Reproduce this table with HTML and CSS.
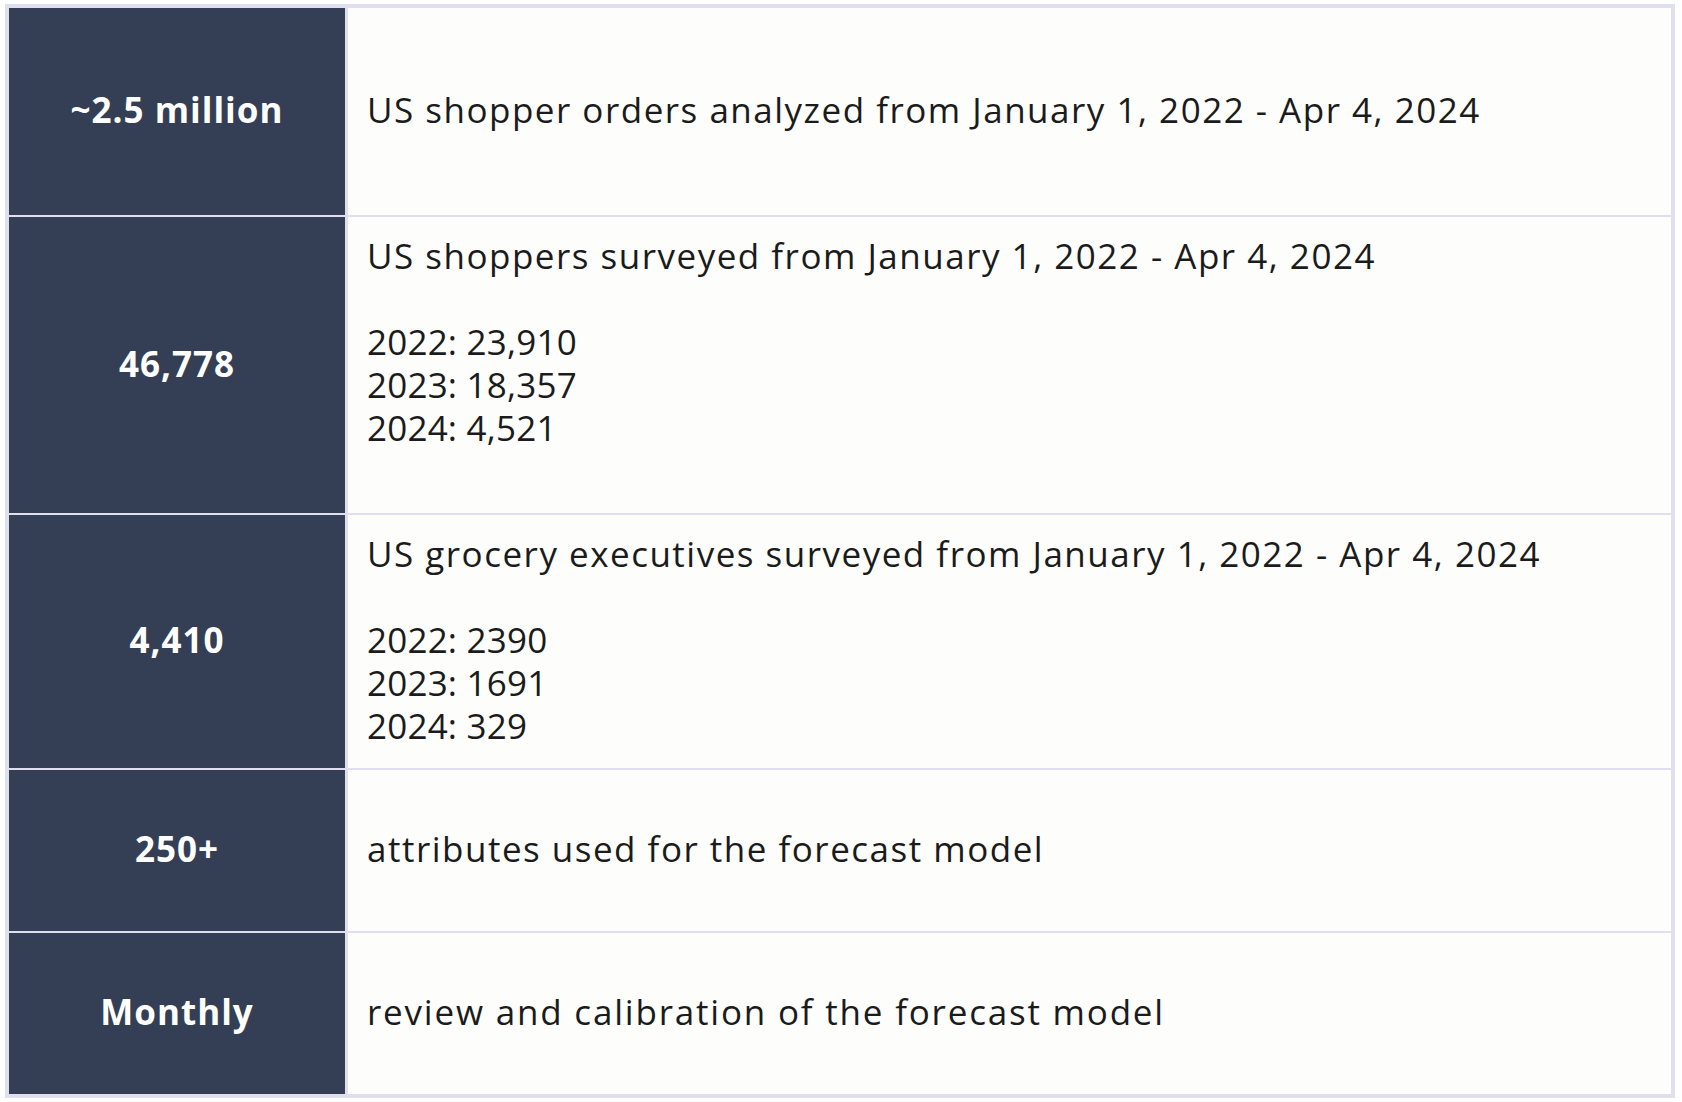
FILE: index.html
```html
<!DOCTYPE html>
<html lang="en">
<head>
<meta charset="utf-8">
<title>Data sources</title>
<link rel="stylesheet" href="styles.css">
</head>
<body>
<div class="facts">
  <div class="key">~2.5 million</div>
  <div class="val val--center">US shopper orders analyzed from January 1, 2022 - Apr 4, 2024</div>

  <div class="key">46,778</div>
  <div class="val">
    <p class="line">US shoppers surveyed from January 1, 2022 - Apr 4, 2024</p>
    <p class="gap-line">2022: 23,910<br>2023: 18,357<br>2024: 4,521</p>
  </div>

  <div class="key">4,410</div>
  <div class="val">
    <p class="line">US grocery executives surveyed from January 1, 2022 - Apr 4, 2024</p>
    <p class="gap-line">2022: 2390<br>2023: 1691<br>2024: 329</p>
  </div>

  <div class="key">250+</div>
  <div class="val val--center">attributes used for the forecast model</div>

  <div class="key">Monthly</div>
  <div class="val val--center val--wide">review and calibration of the forecast model</div>
</div>
</body>
</html>
```

FILE: styles.css
```css
html, body {
  margin: 0;
  padding: 0;
  background: #ffffff;
}

body {
  padding: 4px 0 0 5px;
  font-family: "Open Sans", "DejaVu Sans", sans-serif;
}

.facts {
  width: 1670px;
  box-sizing: border-box;
  display: grid;
  grid-template-columns: 336px 1fr;
  grid-template-rows: 207px 296px 253px 161px 161px;
  gap: 2px 3px;
  border: 4px solid #dfdff0;
  background: #dfdff0;
}

.key {
  background: #343f55;
  color: #ffffff;
  font-weight: 700;
  font-size: 35px;
  display: flex;
  align-items: center;
  justify-content: center;
  letter-spacing: 1px;
  padding-bottom: 4px;
}

.val {
  background: #fdfefc;
  color: #1b1b1b;
  font-size: 35px;
  line-height: 43px;
  padding: 17px 19px 21px;
  letter-spacing: 1.5px;
}

.val--center {
  display: flex;
  align-items: center;
  padding-top: 0;
  padding-bottom: 4px;
}

.val--wide {
  letter-spacing: 1.8px;
}

.line {
  margin: 0;
}

.gap-line {
  margin: 43px 0 0;
  letter-spacing: 0.2px;
}
```
